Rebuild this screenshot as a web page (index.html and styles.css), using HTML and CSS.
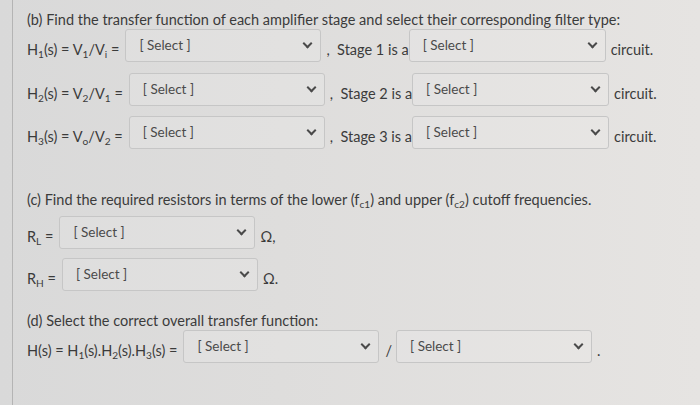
FILE: index.html
```html
<!DOCTYPE html>
<html>
<head>
<meta charset="utf-8">
<link rel="stylesheet" href="styles.css">
</head>
<body>
<div class="page">
  <p class="q q-b">(b) Find the transfer function of each amplifier stage and select their corresponding filter type:</p>
  <div class="row r1">
    <span class="lbl">H<sub>1</sub>(s) = V<sub>1</sub>/V<sub>i</sub> =</span>
    <span class="sel s-a"><span class="ph">[ Select ]</span><span class="chev"></span></span>
    <span class="txt">,&nbsp; Stage 1 is a</span>
    <span class="sel s-b"><span class="ph">[ Select ]</span><span class="chev"></span></span>
    <span class="txt">circuit.</span>
  </div>
  <div class="row r2">
    <span class="lbl">H<sub>2</sub>(s) = V<sub>2</sub>/V<sub>1</sub> =</span>
    <span class="sel s-a"><span class="ph">[ Select ]</span><span class="chev"></span></span>
    <span class="txt">,&nbsp; Stage 2 is a</span>
    <span class="sel s-b"><span class="ph">[ Select ]</span><span class="chev"></span></span>
    <span class="txt">circuit.</span>
  </div>
  <div class="row r3">
    <span class="lbl">H<sub>3</sub>(s) = V<sub>o</sub>/V<sub>2</sub> =</span>
    <span class="sel s-a"><span class="ph">[ Select ]</span><span class="chev"></span></span>
    <span class="txt">,&nbsp; Stage 3 is a</span>
    <span class="sel s-b"><span class="ph">[ Select ]</span><span class="chev"></span></span>
    <span class="txt">circuit.</span>
  </div>

  <p class="q q-c">(c) Find the required resistors in terms of the lower (f<sub>c1</sub>) and upper (f<sub>c2</sub>) cutoff frequencies.</p>
  <div class="row r4">
    <span class="lbl">R<sub>L</sub> =</span>
    <span class="sel s-a"><span class="ph">[ Select ]</span><span class="chev"></span></span>
    <span class="txt">Ω,</span>
  </div>
  <div class="row r5">
    <span class="lbl">R<sub>H</sub> =</span>
    <span class="sel s-a"><span class="ph">[ Select ]</span><span class="chev"></span></span>
    <span class="txt">Ω.</span>
  </div>

  <p class="q q-d">(d) Select the correct overall transfer function:</p>
  <div class="row r6">
    <span class="lbl">H(s) = H<sub>1</sub>(s).H<sub>2</sub>(s).H<sub>3</sub>(s) =</span>
    <span class="sel s-a"><span class="ph">[ Select ]</span><span class="chev"></span></span>
    <span class="txt slash">/</span>
    <span class="sel s-a"><span class="ph">[ Select ]</span><span class="chev"></span></span>
    <span class="txt">.</span>
  </div>
</div>
</body>
</html>
```

FILE: styles.css
```css
html, body {
  margin: 0;
  padding: 0;
  height: 100%;
}
body {
  background: linear-gradient(90deg, #d9d9d9 0%, #dedddc 40%, #e6e4e2 100%);
  font-family: Lato, "Open Sans", sans-serif;
  color: #3b3b3b;
  font-size: 14.5px;
}
.page {
  margin-left: 12px;
  border-left: 1px solid #b4b4b4;
  min-height: 405px;
  padding: 10px 0 0 14px;
  box-sizing: border-box;
}
.q {
  margin: 0;
  line-height: 20px;
}
.q-c { margin-top: 41px; }
.q-d { margin-top: 20px; }
.row {
  display: flex;
  align-items: center;
  height: 34px;
}
.r1 { margin-top: -2px; }
.r2 { margin-top: 10px; }
.r3 { margin-top: 9px; }
.r4 { margin-top: 5px; }
.r5 { margin-top: 8px; }
.r6 { margin-top: -2px; }
sub {
  font-size: 0.7em;
  line-height: 0;
  vertical-align: -0.3em;
}
.lbl {
  margin: 8px 6px 0 0;
  white-space: nowrap;
}
.txt {
  white-space: nowrap;
  margin: 8px 0 0 5px;
}
.slash { margin: 8px 4px 0 6px; }
.sel {
  display: flex;
  align-items: center;
  justify-content: space-between;
  width: 196px;
  height: 33px;
  box-sizing: border-box;
  border: 1px solid #c6c6c6;
  border-radius: 3px;
  background: rgba(255,255,255,0.12);
  padding: 0 9px 0 13px;
}
.s-b { width: 197px; }
.ph {
  font-size: 13.5px;
  color: #4a4a4a;
  margin-top: -1px;
}
.chev {
  width: 5px;
  height: 5px;
  border-right: 2px solid #4a4a4a;
  border-bottom: 2px solid #4a4a4a;
  transform: rotate(45deg);
  margin-top: -3px;
}
```
